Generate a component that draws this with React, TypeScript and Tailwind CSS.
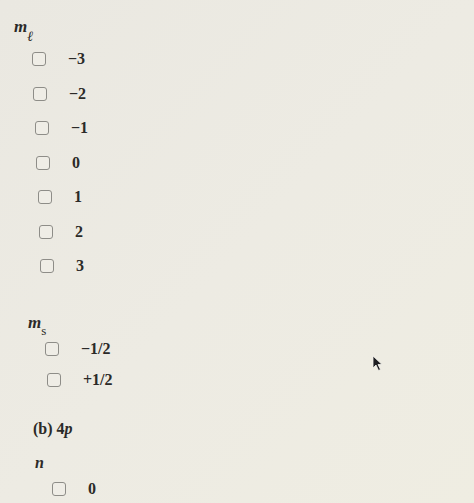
import React from 'react';

type Row = { label: string; pad: string };

// quantum number choices, each row drifts right a bit like the photo
const mlRows: Row[] = [
  { label: '\u22123', pad: 'pl-[32px]' },
  { label: '\u22122', pad: 'pl-[33px]' },
  { label: '\u22121', pad: 'pl-[35px]' },
  { label: '0', pad: 'pl-[36px]' },
  { label: '1', pad: 'pl-[38px]' },
  { label: '2', pad: 'pl-[39px]' },
  { label: '3', pad: 'pl-[40px]' },
];

const msRows: Row[] = [
  { label: '\u22121/2', pad: 'pl-[45px]' },
  { label: '+1/2', pad: 'pl-[47px]' },
];

function Box() {
  return <span className="inline-block w-[14px] h-[14px] rounded-[3px] border-[1.5px] border-[#8e8d88] bg-[#efede6]" />;
}

function Choice({ row, h }: { row: Row; h: string }) {
  return (
    <label className={`flex items-center gap-[22px] ${h} ${row.pad}`}>
      <Box />
      <span className="text-[16px] leading-[16px] font-bold text-[#2b2a28]">{row.label}</span>
    </label>
  );
}

export default function App() {
  return (
    <div
      className="relative w-[474px] h-[503px] overflow-hidden bg-gradient-to-br from-[#eae8e1] via-[#edebe3] to-[#efede2] text-[#2b2a28]"
      style={{ fontFamily: '"Liberation Serif", "Times New Roman", serif' }}
    >
      <div className="flex flex-col">
        <div className="h-[42px] pt-[15px] pl-[14px]">
          <span className="text-[17px] leading-[16px] font-bold italic text-[#2b2a28]">
            m<sub className="text-[14px] align-[-5px] text-[#2b2a28]">ℓ</sub>
          </span>
        </div>
        {mlRows.map(r => (
          <Choice key={r.label} row={r} h="h-[34.5px]" />
        ))}

        <div className="h-[50px] pt-[27px] pl-[28px]">
          <span className="text-[17px] leading-[16px] font-bold italic">
            m<sub className="text-[13px] align-[-4px] not-italic font-normal">s</sub>
          </span>
        </div>
        {msRows.map(r => (
          <Choice key={r.label} row={r} h="h-[31px]" />
        ))}

        <div className="h-[47px] pt-[25px] pl-[33px] text-[16px] leading-[16px] font-bold">
          (b) 4<span className="italic">p</span>
        </div>
        <div className="h-[30px] pt-[12px] pl-[35px] text-[16px] leading-[16px] font-bold italic">n</div>
        <Choice row={{ label: '0', pad: 'pl-[52px]' }} h="h-[32px]" />
      </div>

      {/* mouse pointer */}
      <svg className="absolute left-[372px] top-[355px]" width="12" height="17" viewBox="0 0 12 17">
        <path d="M1 1 L1 13 L4 10 L6.5 15.5 L8.5 14.5 L6 9.5 L10 9.5 Z" fill="#1e1e22" stroke="#f4f3ee" strokeWidth="0.8" />
      </svg>
    </div>
  );
}
